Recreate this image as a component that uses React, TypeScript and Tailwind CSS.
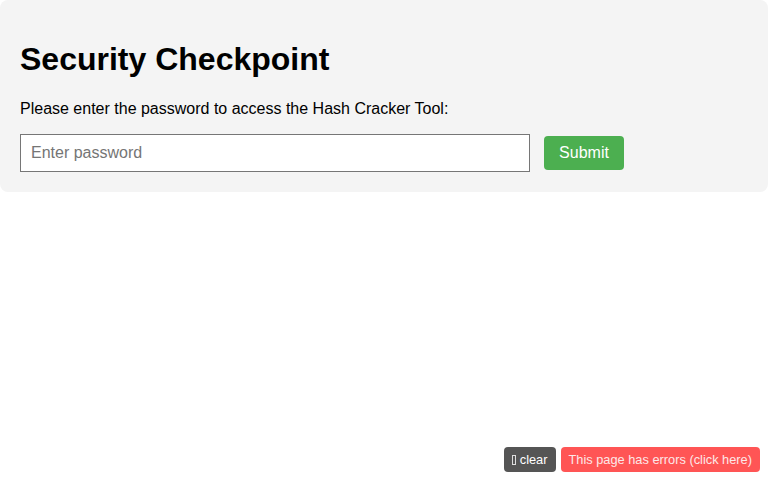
export default function App() {
  return (
    <div className="min-h-[480px] bg-white font-['Liberation_Sans',Arial,sans-serif] text-black">
      <div className="rounded-lg bg-[#f4f4f4] p-5">
        <h1 className="my-[21.44px] text-[32px] font-bold leading-[normal]">Security Checkpoint</h1>
        <p className="mb-4 text-base leading-[normal]">
          Please enter the password to access the Hash Cracker Tool:
        </p>
        <div className="flex items-center gap-[14px]">
          <input
            type="password"
            placeholder="Enter password"
            className="h-[38px] w-[510px] border border-[#767676] bg-white px-[10px] text-base placeholder:text-[#757575] outline-none"
          />
          <button className="h-[34px] w-[80px] rounded bg-[#4caf50] text-base text-white">Submit</button>
        </div>
      </div>

      <div className="fixed bottom-2 right-2 flex gap-[5px] text-[12.8px] leading-[25px]">
        <button className="flex h-[25px] items-center gap-[4px] rounded bg-[#555] px-2 text-white">
          <span className="inline-block h-[10px] w-[4px] border border-white/80" />
          clear
        </button>
        <button className="h-[25px] rounded bg-[#f55] px-2 text-[#fde8e8]">This page has errors (click here)</button>
      </div>
    </div>
  )
}
